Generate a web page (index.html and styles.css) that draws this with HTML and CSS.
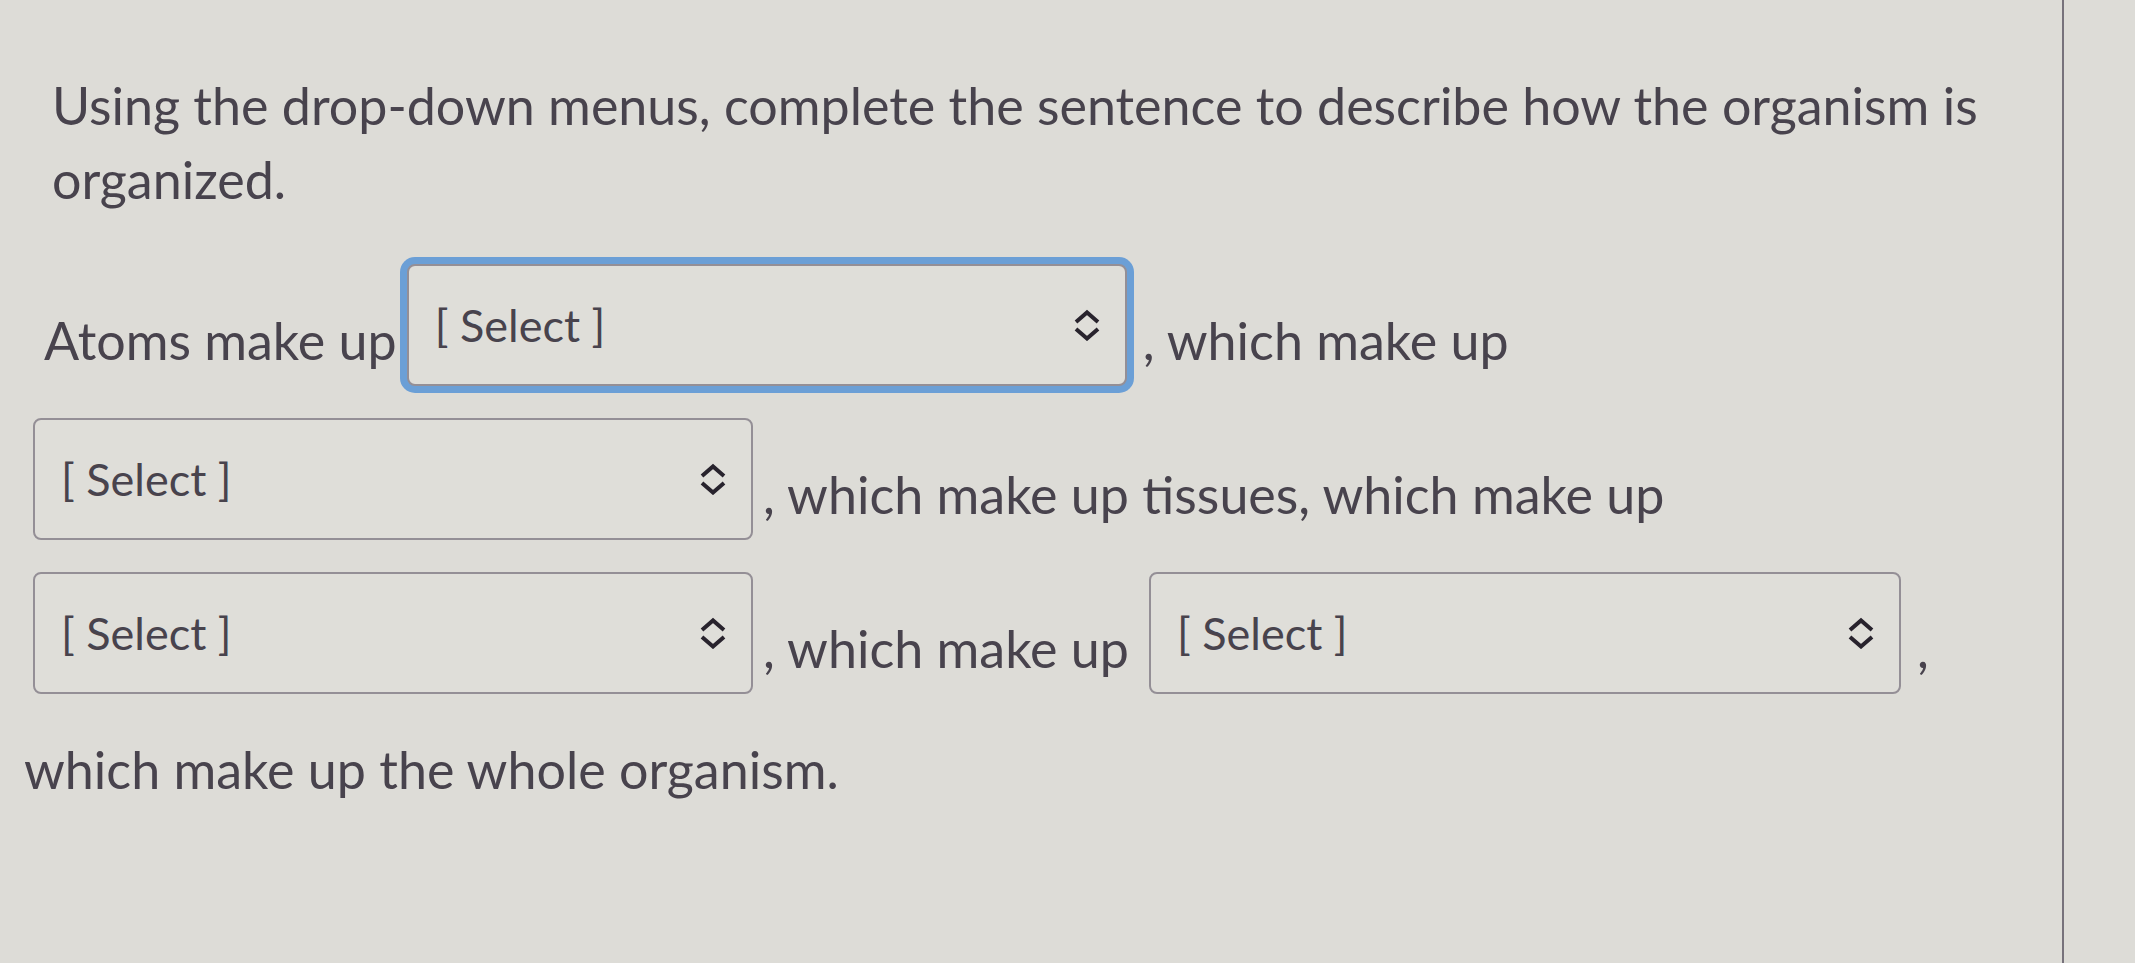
FILE: index.html
```html
<!DOCTYPE html>
<html lang="en">
<head>
  <meta charset="UTF-8">
  <meta name="viewport" content="width=device-width, initial-scale=1.0">
  <title>Organism Organization Question</title>
  <link rel="stylesheet" href="styles.css">
</head>
<body>
  <div class="page">
    <div class="question">
      <p class="prompt">Using the drop-down menus, complete the sentence to describe how the organism is organized.</p>

      <div class="row row-first">
        <span class="text">Atoms make up</span>
        <div class="dropdown focused">
          <select>
            <option>[ Select ]</option>
            <option>molecules</option>
            <option>cells</option>
          </select>
          <svg class="chevron" viewBox="0 0 30 32"><path d="M4 13 L15 3.5 L26 13 M4 20 L15 29.5 L26 20"/></svg>
        </div>
        <span class="text">, which make up</span>
      </div>

      <div class="row">
        <div class="dropdown">
          <select>
            <option>[ Select ]</option>
            <option>cells</option>
            <option>molecules</option>
          </select>
          <svg class="chevron" viewBox="0 0 30 32"><path d="M4 13 L15 3.5 L26 13 M4 20 L15 29.5 L26 20"/></svg>
        </div>
        <span class="text">, which make up tissues, which make up</span>
      </div>

      <div class="row">
        <div class="dropdown">
          <select>
            <option>[ Select ]</option>
            <option>organs</option>
            <option>organ systems</option>
          </select>
          <svg class="chevron" viewBox="0 0 30 32"><path d="M4 13 L15 3.5 L26 13 M4 20 L15 29.5 L26 20"/></svg>
        </div>
        <span class="text">, which make up</span>
        <div class="dropdown wide">
          <select>
            <option>[ Select ]</option>
            <option>organ systems</option>
            <option>organs</option>
          </select>
          <svg class="chevron" viewBox="0 0 30 32"><path d="M4 13 L15 3.5 L26 13 M4 20 L15 29.5 L26 20"/></svg>
        </div>
        <span class="text">,</span>
      </div>

      <p class="closing">which make up the whole organism.</p>
    </div>
  </div>
</body>
</html>
```

FILE: styles.css
```css
* {
  margin: 0;
  padding: 0;
  box-sizing: border-box;
}

body {
  background: #dddcd7;
  font-family: 'Lato', 'Open Sans', sans-serif;
  color: #48434d;
  overflow: hidden;
}

.page {
  width: 2064px;
  min-height: 963px;
  border-right: 2px solid #77727b;
}

.question {
  padding-top: 68px;
}

.prompt {
  width: 1990px;
  padding-left: 52px;
  font-size: 52px;
  line-height: 74px;
  margin-bottom: 48px;
}

.row {
  display: flex;
  align-items: flex-end;
  padding-left: 33px;
  margin-bottom: 32px;
}

.row-first {
  padding-left: 44px;
}

.text {
  font-size: 52px;
  line-height: 1.2;
  margin-bottom: 15px;
  white-space: pre;
}

.row-first .text:first-child {
  margin-right: 10px;
}

.dropdown {
  position: relative;
  width: 720px;
  height: 122px;
  margin-right: 10px;
}

.dropdown.focused {
  margin-right: 16px;
}

.dropdown.wide {
  width: 752px;
  margin-left: 20px;
  margin-right: 16px;
}

.dropdown select {
  appearance: none;
  -webkit-appearance: none;
  width: 100%;
  height: 100%;
  padding: 0 80px 0 26px;
  background: #dfded9;
  border: 2px solid #948f96;
  border-radius: 8px;
  font-family: 'Lato', 'Open Sans', sans-serif;
  font-size: 45px;
  color: #48434d;
  outline: none;
}

.dropdown.focused select {
  box-shadow: 0 0 0 7px #6b9fd6;
}

.chevron {
  position: absolute;
  right: 25px;
  top: 45px;
  width: 30px;
  height: 32px;
  pointer-events: none;
  fill: none;
  stroke: #28232d;
  stroke-width: 4;
}

.closing {
  padding-left: 24px;
  margin-top: 44px;
  font-size: 52px;
  line-height: 1.2;
}
```
